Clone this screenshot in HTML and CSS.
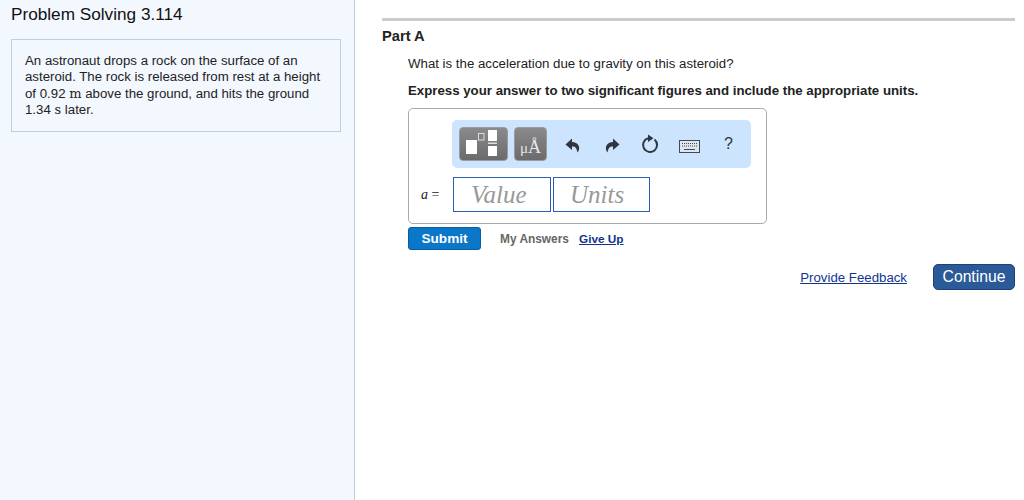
FILE: index.html
```html
<!DOCTYPE html>
<html lang="en">
<head>
<meta charset="utf-8">
<title>Problem Solving 3.114</title>
<link rel="stylesheet" href="styles.css">
</head>
<body>
<div class="page">
  <aside class="side">
    <h1 class="title">Problem Solving 3.114</h1>
    <div class="intro">An astronaut drops a rock on the surface of an asteroid. The rock is released from rest at a height of 0.92 <span class="unit">m</span> above the ground, and hits the ground 1.34 <span class="unit">s</span> later.</div>
  </aside>
  <main class="main">
    <h2 class="part">Part A</h2>
    <div class="body">
      <p class="question">What is the acceleration due to gravity on this asteroid?</p>
      <p class="instr">Express your answer to two significant figures and include the appropriate units.</p>
      <div class="answer">
        <div class="toolbar">
          <div class="tpl wide">
            <svg width="49" height="34" viewBox="0 0 49 34"><rect x="7" y="13" width="11" height="14" fill="#fff"/><rect x="19.500" y="6.500" width="5.500" height="6.500" fill="none" stroke="#ddd"/><rect x="29" y="3" width="9" height="11" fill="#fff"/><rect x="29" y="15.500" width="9" height="1.500" fill="#ddd"/><rect x="29" y="19" width="9" height="10" fill="#fff"/></svg>
          </div>
          <div class="tpl narrow"><span class="mu"><span class="micro">μ</span>Å</span></div>
          <svg class="ico undo" width="16" height="17" viewBox="0 0 16 16"><path d="M7 1 .5 7 7 12.500V9c2.500-.5 4.500.5 5.500 6 2-2.500 2-5 1-7C12.500 6 10 4.500 7 4.500z" fill="#2f3640"/></svg>
          <svg class="ico redo" width="16" height="17" viewBox="0 0 16 16"><path d="M9 1l6.500 6L9 12.500V9c-2.500-.5-4.500.5-5.500 6-2-2.500-2-5-1-7C3.500 6 6 4.500 9 4.500z" fill="#2f3640"/></svg>
          <svg class="ico reset" width="18" height="20" viewBox="0 0 18 20"><path d="M13.500 5.600A7 7 0 1 1 7 4.300" fill="none" stroke="#2f3640" stroke-width="2"/><path d="M7 .5 12.500 4.300 7 8z" fill="#2f3640"/></svg>
          <svg class="ico kbd" width="21" height="13" viewBox="0 0 21 13"><rect x=".5" y=".5" width="20" height="12" fill="#dfe6ee" stroke="#3d4a5a"/><path d="M3 3.500h15M3 6h15" stroke="#3d4a5a" stroke-dasharray="1 1"/><path d="M5 9.500h11" stroke="#3d4a5a"/></svg>
          <span class="help">?</span>
        </div>
        <div class="row">
          <span class="label"><i>a</i> =</span>
          <div class="field">Value</div>
          <div class="field units">Units</div>
        </div>
      </div>
      <div class="actions">
        <button class="submit">Submit</button>
        <span class="myans">My Answers</span>
        <a class="giveup" href="#">Give Up</a>
      </div>
    </div>
    <div class="foot">
      <a class="feedback" href="#">Provide Feedback</a>
      <button class="continue">Continue</button>
    </div>
  </main>
</div>
</body>
</html>
```
FILE: styles.css
```css
* { box-sizing: border-box; }
html, body { margin: 0; height: 100%; }
body { font-family: "Liberation Sans", Arial, sans-serif; color: #222; background: #fff; }
.page { display: flex; height: 500px; overflow: hidden; }
.side { width: 355px; flex: none; background: #f3f8ff; border-right: 1px solid #bccfe3; padding: 5px 13px 0 11px; }
.title { margin: 0 0 15px; font-size: 17.200px; font-weight: 400; line-height: 19px; color: #111; }
.intro { border: 1px solid #bccfe3; height: 93px; padding: 13px 13px 0; font-size: 13.250px; line-height: 16.300px; color: #222; }
.unit { font-family: "DejaVu Serif", serif; font-size: 13px; line-height: 1; }
.main { flex: 1; padding: 18px 9px 0 27px; }
.part { margin: 0; border-top: 3px solid #ccc; padding-top: 7px; font-size: 14.700px; line-height: 17px; font-weight: 700; color: #222; }
.body { padding-left: 26px; }
.question { margin: 11px 0 0; font-size: 13.250px; line-height: 15px; color: #222; }
.instr { margin: 12px 0 0; font-size: 13.250px; line-height: 15px; font-weight: 700; color: #222; }
.answer { margin-top: 10px; width: 359px; height: 116px; border: 1px solid #aaa; border-radius: 5px; padding: 11px 16px 0 43px; }
.toolbar { display: flex; align-items: center; height: 48px; width: 299px; background: #cde4fe; border-radius: 5px; padding-left: 7px; }
.tpl { height: 34px; border-radius: 4px; background: linear-gradient(#8a898b, #6b6a6c); border: 1px solid #9a9a9c; display: flex; align-items: center; justify-content: center; }
.wide { width: 49px; }
.wide svg { flex: none; margin: -1px; }
.narrow { width: 33px; margin-left: 6px; }
.mu { font-family: "Liberation Serif", serif; font-size: 18px; line-height: 1; color: #e6e6e6; padding-top: 5px; }
.micro { font-size: 15px; }
.ico { flex: none; }
.undo { margin: 3px 0 0 18px; }
.redo { margin: 3px 0 0 23px; }
.reset { margin-left: 21px; }
.kbd { margin: 5px 0 0 20px; }
.help { margin-left: 24px; font-size: 16px; color: #2f3640; }
.row { display: flex; align-items: center; gap: 2px; margin-top: 9px; }
.label { width: 32px; margin: 0 -1px 0 -32px; padding-left: 1px; font-family: "Liberation Serif", serif; font-size: 14px; color: #222; }
.field { width: 98px; height: 35px; border: 1px solid #2d5fb5; font-family: "Liberation Serif", serif; font-style: italic; font-size: 25px; line-height: 33px; color: #999; padding-left: 17px; background: #fff; }
.units { width: 97px; padding-left: 16px; }
.actions { display: flex; align-items: center; margin-top: 2px; height: 24px; }
.submit { width: 73px; height: 23px; border: 1px solid #0b5c9e; border-radius: 3px; background: #0b77c8; color: #fff; font: 700 13.600px "Liberation Sans", sans-serif; padding: 0; }
.myans { margin: 2px 0 0 19px; font-size: 11.900px; font-weight: 700; color: #666; }
.giveup { margin: 2px 0 0 10px; font-size: 11.800px; font-weight: 700; color: #12358f; }
.foot { display: flex; justify-content: flex-end; align-items: center; margin-top: 14px; }
.feedback { font-size: 13.250px; color: #12358f; }
.continue { margin-left: 26px; width: 82px; height: 26px; border: 1px solid #1c4377; border-radius: 5px; background: #2b5a98; color: #fff; font: 400 15.700px "Liberation Sans", sans-serif; padding: 0; }
```
